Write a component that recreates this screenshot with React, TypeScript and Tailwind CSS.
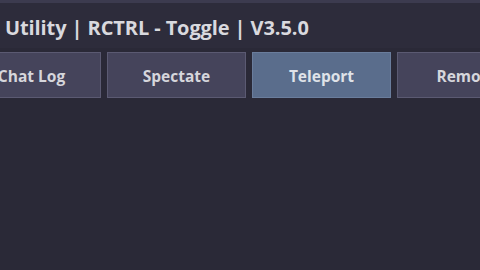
import React from "react";

const tabs = ["Chat Log", "Spectate", "Teleport", "Remote"];

export default function App() {
  return (
    <div className="w-[480px] h-[270px] overflow-hidden bg-[#2a2937] flex flex-col" style={{ fontFamily: '"Open Sans", "Noto Sans", sans-serif' }}>
      <div className="h-[3px] bg-[#3c3b4f] shrink-0" />
      <div className="h-[45px] shrink-0 bg-[#2d2c3b] flex items-center pl-[5px] pt-[5px]">
        <span className="text-[20px] font-bold text-[#d9d9de] whitespace-nowrap tracking-[-0.1px]">
          Utility | RCTRL - Toggle | V3.5.0
        </span>
      </div>
      <div className="flex gap-[6px] ml-[-38px] mt-[4px] shrink-0">
        {tabs.map((t) => (
          <div
            key={t}
            className={
              "w-[139px] h-[46px] shrink-0 flex items-center justify-center border pt-[3px] text-[15.5px] font-bold whitespace-nowrap " +
              (t === "Teleport"
                ? "bg-[#5a6d8c] border-[#6a7d9c] text-[#dfe2e8]"
                : "bg-[#45445b] border-[#5b5a72] text-[#d6d6dc]")
            }
          >
            {t}
          </div>
        ))}
      </div>
      <div className="flex-1" />
    </div>
  );
}
